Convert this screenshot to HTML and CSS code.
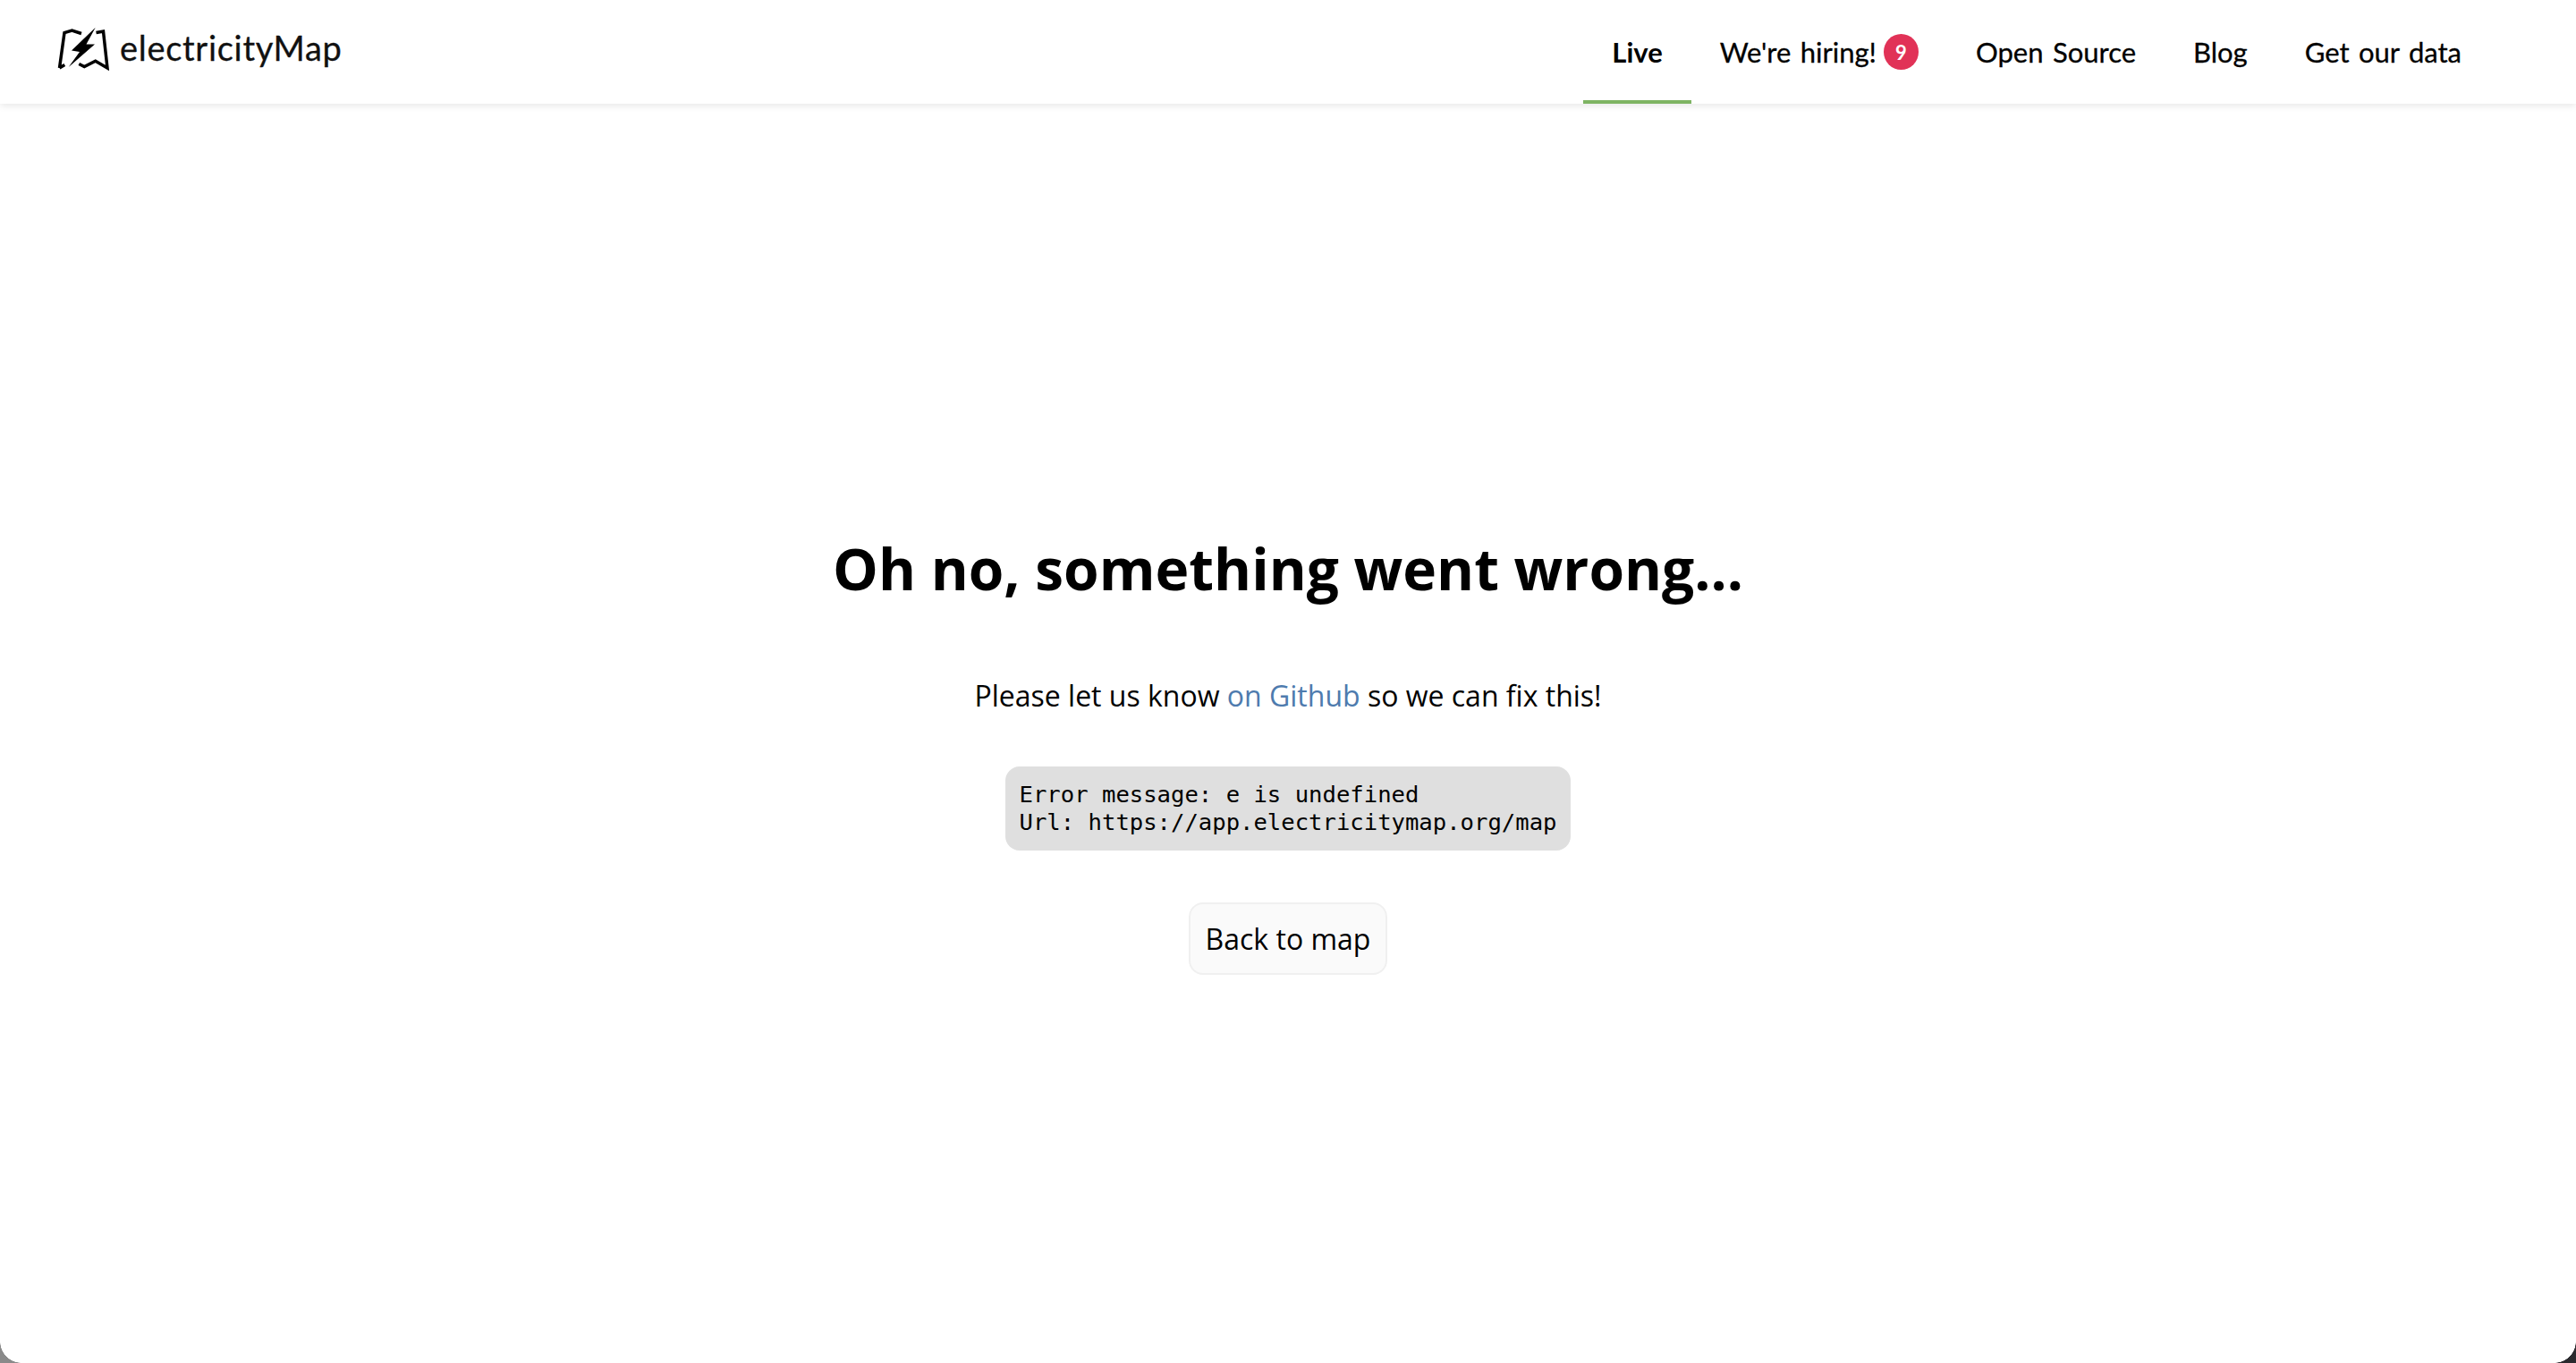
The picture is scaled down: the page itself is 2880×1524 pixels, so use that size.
FILE: index.html
```html
<!DOCTYPE html>
<html lang="en">
<head>
<meta charset="utf-8">
<title>electricityMap</title>
<link rel="stylesheet" href="styles.css">
</head>
<body>
<header class="header">
  <a class="logo" href="#">
    <svg class="logo-icon" viewBox="0 0 60 52" aria-hidden="true">
      <path class="logo-map" d="M2.5 48 L8 8.5 L16.5 6 L27 9.5 M43.5 8.5 L51.5 7 L56 48 L42.7 40.3 L30.3 46.5 L24.3 43.5 M2.5 48 L8.3 44.5"/>
      <path class="logo-bolt" d="M42.7 2.7 L16 28.5 L25 30 L12.7 47 L42 21.5 L32.5 21.5 Z"/>
    </svg>
    <span class="logo-text">electricityMap</span>
  </a>
  <nav class="nav">
    <a class="nav-item active" href="#">Live</a>
    <a class="nav-item" href="#">We're hiring!<span class="badge">9</span></a>
    <a class="nav-item" href="#">Open Source</a>
    <a class="nav-item" href="#">Blog</a>
    <a class="nav-item" href="#">Get our data</a>
  </nav>
</header>
<main class="main">
  <h1 class="title">Oh no, something went wrong...</h1>
  <p class="lead">Please let us know <a class="link" href="#">on Github</a> so we can fix this!</p>
  <pre class="error">Error message: e is undefined
Url: https://app.electricitymap.org/map</pre>
  <a class="button" href="#">Back to map</a>
</main>
<div class="corner corner-left"></div>
<div class="corner corner-right"></div>
</body>
</html>
```
FILE: styles.css
```css
* { box-sizing: border-box; }
html, body { height: 100%; }
body {
  margin: 0;
  background: #fff;
  color: #000;
  font-family: "Open Sans", sans-serif;
  overflow: hidden;
  position: relative;
}
a { color: inherit; text-decoration: none; }
.header {
  height: 116px;
  display: flex;
  justify-content: space-between;
  align-items: stretch;
  padding: 0 96px 0 64px;
  background: #fff;
  box-shadow: 0 2px 8px rgba(0,0,0,0.1);
  position: relative;
}
.logo { display: flex; align-items: flex-start; padding-top: 28px; gap: 10px; }
.logo-icon { width: 60px; height: 52px; display: block; }
.logo-map { fill: none; stroke: #000; stroke-width: 3.5; }
.logo-bolt { fill: #000; }
.logo-text {
  font-family: Lato, sans-serif;
  font-size: 38px;
  letter-spacing: 0.7px;
  line-height: 50px;
  color: #111;
  -webkit-text-stroke: 0.3px #111;
}
.nav {
  display: flex;
  align-items: stretch;
  font-family: Lato, sans-serif;
  font-size: 31px;
  word-spacing: 2.5px;
  -webkit-text-stroke: 0.3px #000;
}
.nav-item {
  display: flex;
  align-items: center;
  padding: 4px 32px 0;
  border-bottom: 4px solid transparent;
}
.nav-item.active { font-weight: 700; border-bottom-color: #7eb463; -webkit-text-stroke: 0; }
.badge {
  width: 39px;
  height: 40px;
  border-radius: 50%;
  background: #e13257;
  color: #fff;
  font-size: 22px;
  font-weight: 700;
  display: flex;
  align-items: center;
  justify-content: center;
  margin-left: 8px;
  -webkit-text-stroke: 0;
}
.main {
  display: flex;
  flex-direction: column;
  align-items: center;
  padding-top: 476px;
}
.title { margin: 0; font-size: 64px; font-weight: 700; line-height: 88px; }
.lead { margin: 76px 0 0; font-size: 32px; line-height: 44px; }
.link { color: #4e7bae; }
.error {
  margin: 57px 0 0;
  padding: 16px;
  background: #dfdfdf;
  border-radius: 16px;
  font-family: "DejaVu Sans Mono", monospace;
  font-size: 25.6px;
  line-height: 31px;
}
.button {
  margin-top: 58px;
  height: 81px;
  padding: 0 17px;
  display: flex;
  align-items: center;
  background: #fafafa;
  border: 2px solid #f0f0f0;
  border-radius: 16px;
  font-size: 32px;
}
.corner {
  position: absolute;
  bottom: 0;
  width: 24px;
  height: 24px;
}
.corner-left { left: 0; background: radial-gradient(circle at 100% 0, transparent 23.5px, #8a8a8a 24px); }
.corner-right { right: 0; background: radial-gradient(circle at 0 0, transparent 23.5px, #2a2a2e 24px); }
```
